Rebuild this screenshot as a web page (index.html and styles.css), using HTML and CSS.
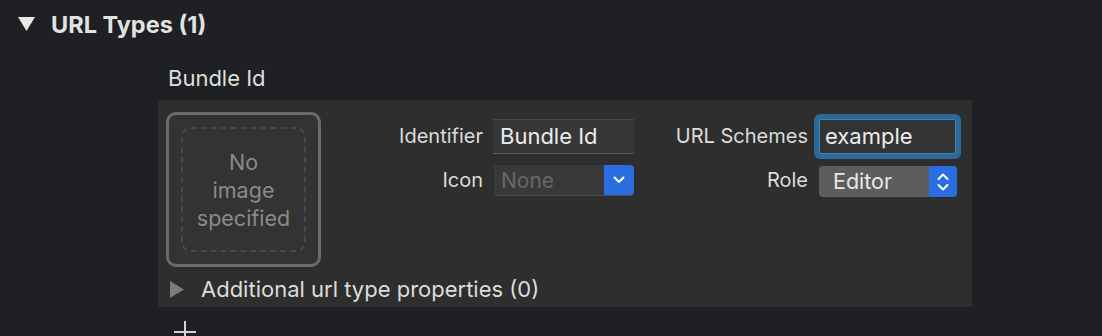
FILE: index.html
```html
<!DOCTYPE html>
<html lang="en">
<head>
    <meta charset="UTF-8">
    <title>URL Types</title>
    <link rel="stylesheet" href="styles.css">
</head>
<body>
<div id="principal">
    <div class="secao-titulo">
        <svg class="seta-aberta" width="17" height="14" viewBox="0 0 17 14"><polygon points="0,0 17,0 8.5,14" fill="#e8e8e8"/></svg>
        <span>URL Types (1)</span>
    </div>

    <div class="tipo">
        <div class="tipo-nome">Bundle Id</div>
        <div class="painel">
            <div class="painel-topo">
                <div class="imagem">
                    <div class="imagem-tracejada">No<br>image<br>specified</div>
                </div>

                <div class="formulario">
                    <label class="rotulo">Identifier</label>
                    <div class="campo">Bundle Id</div>
                    <label class="rotulo">URL Schemes</label>
                    <div class="campo campo-foco">example</div>

                    <label class="rotulo">Icon</label>
                    <div class="popup popup-vazio">
                        <span class="popup-texto">None</span>
                        <span class="popup-botao">
                            <svg width="12" height="8" viewBox="0 0 12 8"><polyline points="1.5,1.5 6,6 10.5,1.5" fill="none" stroke="#fff" stroke-width="2" stroke-linecap="round" stroke-linejoin="round"/></svg>
                        </span>
                    </div>
                    <label class="rotulo">Role</label>
                    <div class="popup popup-role">
                        <span class="popup-texto">Editor</span>
                        <span class="popup-botao">
                            <svg width="12" height="20" viewBox="0 0 12 20"><polyline points="1.5,7 6,2.5 10.5,7" fill="none" stroke="#fff" stroke-width="2" stroke-linecap="round" stroke-linejoin="round"/><polyline points="1.5,13 6,17.5 10.5,13" fill="none" stroke="#fff" stroke-width="2" stroke-linecap="round" stroke-linejoin="round"/></svg>
                        </span>
                    </div>
                </div>
            </div>

            <div class="adicionais">
                <svg class="seta-fechada" width="14" height="17" viewBox="0 0 14 17"><polygon points="0,0 14,8.5 0,17" fill="#7c7c7c"/></svg>
                <span>Additional url type properties (0)</span>
            </div>
        </div>

        <div class="adicionar">
            <svg width="24" height="24" viewBox="0 0 24 24"><path d="M12 0 V24 M1 11 H23" stroke="#d4d4d4" stroke-width="2" fill="none"/></svg>
        </div>
    </div>
</div>
</body>
</html>
```

FILE: styles.css
```css
* {
    box-sizing: border-box;
    font-family: Inter, "Noto Sans", Helvetica, Arial, sans-serif;
}

body {
    margin: 0;
    background-color: #1f2023;
    color: #dedede;
    height: 336px;
    overflow: hidden;
}

.secao-titulo {
    display: flex;
    align-items: center;
    height: 48px;
    padding-left: 18px;
    font-size: 23.5px;
    font-weight: 700;
    color: #e2e2e2;
}

.seta-aberta {
    margin-right: 16px;
}

.tipo {
    margin-left: 158px;
    width: 814px;
}

.tipo-nome {
    font-size: 22px;
    height: 52px;
    line-height: 30px;
    padding: 15px 0 0 10px;
}

.painel {
    background-color: #2e2e2e;
    height: 207px;
}

.painel-topo {
    display: flex;
    padding: 12px 0 0 8px;
}

.imagem {
    width: 155px;
    height: 155px;
    border: 3px solid #6b6b6b;
    border-radius: 10px;
    background-color: #333;
    padding: 12px;
}

.imagem-tracejada {
    height: 100%;
    border: 2px dashed #484848;
    border-radius: 10px;
    display: flex;
    align-items: center;
    justify-content: center;
    text-align: center;
    color: #8a8a8a;
    font-size: 21.5px;
    line-height: 28px;
}

.formulario {
    display: grid;
    grid-template-columns: 142px 141px 164px 139px;
    grid-template-rows: 48px 36px;
    column-gap: 10px;
    row-gap: 2px;
    align-items: center;
    margin-left: 20px;
}

.rotulo {
    text-align: right;
    font-size: 20px;
    color: #dcdcdc;
}

.campo {
    height: 35px;
    background-color: #373737;
    border-top: 1px solid #444;
    border-bottom: 1px solid #5a5a5a;
    font-size: 22px;
    color: #ececec;
    line-height: 33px;
    padding-left: 7px;
}

.campo-foco {
    margin-left: 1px;
    width: 137px;
    background-color: #333;
    border: 1px solid #3f84b6;
    border-radius: 2px;
    box-shadow: 0 0 0 5px #2c6898;
    padding-left: 5px;
}

.popup {
    display: flex;
    height: 31px;
    border-radius: 4px;
    overflow: hidden;
    font-size: 21px;
}

.popup-texto {
    flex-grow: 1;
    line-height: 31px;
    padding-left: 7px;
}

.popup-vazio {
    margin-left: 1px;
    background-color: #393939;
    color: #676767;
    border-radius: 2px 4px 4px 2px;
    border-bottom: 1px solid #4c4c4c;
}

.popup-role {
    margin: 3px 0 0 1px;
    width: 138px;
    background-color: #5d5d5d;
    color: #e8e8e8;
    font-size: 21.5px;
}

.popup-role .popup-texto {
    padding-left: 14px;
}

.popup-botao {
    display: flex;
    align-items: center;
    justify-content: center;
    width: 30px;
    background-color: #2a6de0;
}

.popup-role .popup-botao {
    width: 28px;
}

.adicionais {
    display: flex;
    align-items: center;
    height: 36px;
    margin-top: 4px;
    padding-left: 12px;
    font-size: 22px;
    color: #dcdcdc;
}

.seta-fechada {
    margin-right: 17px;
}

.adicionar {
    padding: 14px 0 0 15px;
}
```
